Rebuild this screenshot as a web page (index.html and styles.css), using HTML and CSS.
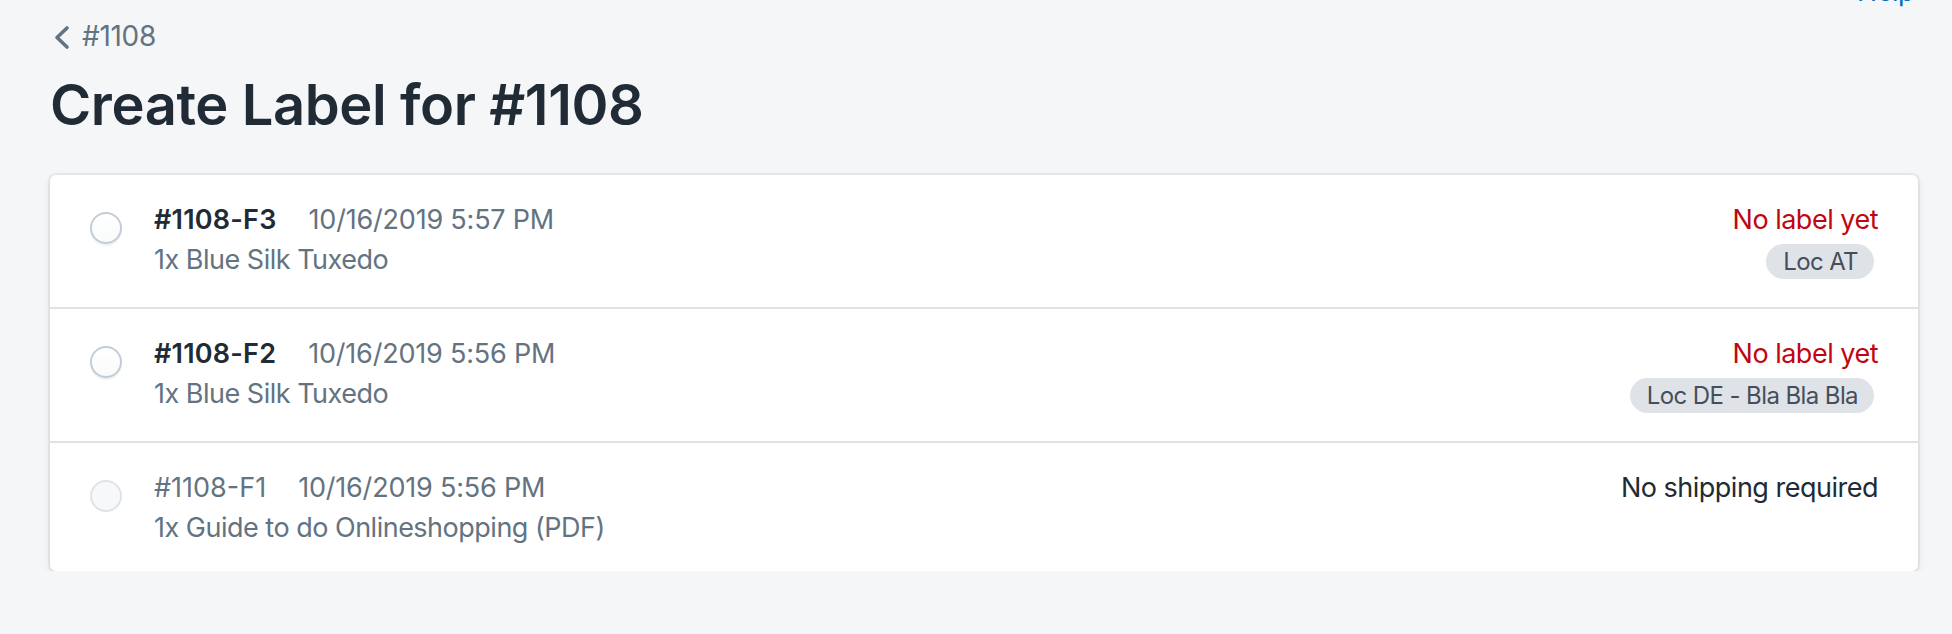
FILE: index.html
```html
<!DOCTYPE html>
<html lang="en">
    <head>
        <title>Create Label for #1108</title>
        <meta charset="UTF-8"/>
        <meta name="viewport" content="width=device-width" />

        <link rel="stylesheet" href="styles.css">
    </head>
    <body>
        <div id="page">

            <div class="topbar">
                <a class="help" href="#">Help</a>
            </div>

            <a class="breadcrumb" href="#">
                <svg class="chevron" width="26" height="40" viewBox="0 0 26 40">
                    <path d="M17 12 L7 21.5 L17 31" fill="none" stroke="#637381" stroke-width="3.6" stroke-linecap="round" stroke-linejoin="round"/>
                </svg>
                <span>#1108</span>
            </a>

            <h1 class="title">Create Label for #1108</h1>

            <div class="card">
                <div class="row">
                    <span class="radio"></span>
                    <div class="info">
                        <div class="line">
                            <span class="name">#1108-F3</span>
                            <span class="date">10/16/2019 5:57 PM</span>
                        </div>
                        <div class="items">1x Blue Silk Tuxedo</div>
                    </div>
                    <div class="status">
                        <div class="nolabel">No label yet</div>
                        <span class="badge">Loc AT</span>
                    </div>
                </div>

                <div class="row">
                    <span class="radio"></span>
                    <div class="info">
                        <div class="line">
                            <span class="name">#1108-F2</span>
                            <span class="date">10/16/2019 5:56 PM</span>
                        </div>
                        <div class="items">1x Blue Silk Tuxedo</div>
                    </div>
                    <div class="status">
                        <div class="nolabel">No label yet</div>
                        <span class="badge">Loc DE - Bla Bla Bla</span>
                    </div>
                </div>

                <div class="row disabled">
                    <span class="radio"></span>
                    <div class="info">
                        <div class="line">
                            <span class="name">#1108-F1</span>
                            <span class="date">10/16/2019 5:56 PM</span>
                        </div>
                        <div class="items">1x Guide to do Onlineshopping (PDF)</div>
                    </div>
                    <div class="status">
                        <div class="noship">No shipping required</div>
                    </div>
                </div>
            </div>

        </div>
    </body>
</html>
```

FILE: styles.css
```css
* {
    margin: 0px;
    padding: 0px;
    box-sizing: border-box;
}

body {
    background: #f4f6f8;
    font-family: Inter, "Noto Sans", sans-serif;
    font-size: 27px;
    line-height: 40px;
    letter-spacing: -0.5px;
    color: #212b36;
    overflow: hidden;
}

#page {
    padding: 0px 34px 0px 50px;
}

.topbar {
    display: flex;
    justify-content: flex-end;
    height: 40px;
    margin-top: -28px;
    padding-right: 4px;
}

.help {
    color: #006fbb;
    text-decoration: none;
}

.breadcrumb {
    display: flex;
    align-items: center;
    margin-top: 4px;
    font-size: 28px;
    letter-spacing: -0.3px;
    color: #637381;
    text-decoration: none;
}

.chevron {
    display: block;
    margin-right: 6px;
}

.title {
    margin-top: 17px;
    font-size: 56px;
    line-height: 64px;
    font-weight: 600;
    letter-spacing: -0.4px;
    color: #212b36;
}

.card {
    margin-top: 38px;
    background: #fff;
    border-radius: 6px;
    box-shadow: 0 0 0 2px rgba(63, 63, 68, 0.05), 0 2px 6px rgba(63, 63, 68, 0.15);
}

.row {
    display: flex;
    align-items: flex-start;
    padding: 25px 40px 24px 40px;
}

.row + .row {
    border-top: 2px solid #dfe3e8;
}

.radio {
    flex-shrink: 0;
    width: 32px;
    height: 32px;
    margin-top: 12px;
    margin-right: 32px;
    border: 2px solid #c4cdd5;
    border-radius: 50%;
    background: linear-gradient(#ffffff, #f9fafb);
    box-shadow: 0 2px 0 rgba(22, 29, 37, 0.06);
}

.line {
    display: flex;
    gap: 32px;
}

.name {
    font-weight: 600;
    letter-spacing: 0.2px;
    color: #212b36;
}

.date {
    letter-spacing: -0.2px;
}

.date,
.items {
    color: #637381;
}

.disabled {
    padding-bottom: 23px;
}

.disabled .radio {
    border-color: #dfe3e8;
    background: #f6f8fa;
    box-shadow: none;
}

.disabled .name {
    font-weight: 400;
    letter-spacing: 0px;
    color: #637381;
}

.status {
    margin-left: auto;
    display: flex;
    flex-direction: column;
    align-items: flex-end;
}

.nolabel {
    color: #bf0711;
}

.noship {
    color: #212b36;
}

.badge {
    display: inline-block;
    margin: 4px 4px 4px 0px;
    padding: 2px 16px 2px 17px;
    font-size: 24px;
    line-height: 31px;
    letter-spacing: -0.6px;
    color: #454f5b;
    background: #dfe3e8;
    border-radius: 40px;
}
```
